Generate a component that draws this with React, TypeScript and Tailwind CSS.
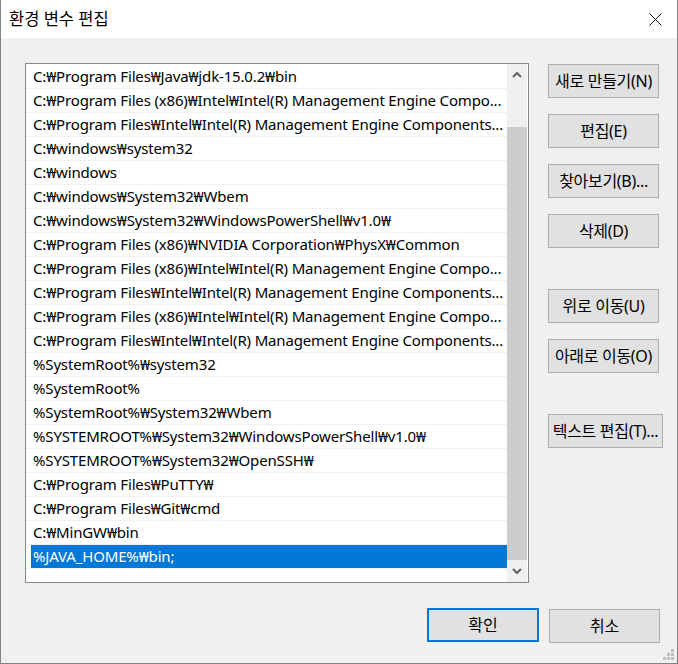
const FONT = { fontFamily: '"Noto Sans", "Noto Sans CJK KR", sans-serif' };

const PATHS = [
  'C:₩Program Files₩Java₩jdk-15.0.2₩bin',
  'C:₩Program Files (x86)₩Intel₩Intel(R) Management Engine Compo...',
  'C:₩Program Files₩Intel₩Intel(R) Management Engine Components...',
  'C:₩windows₩system32',
  'C:₩windows',
  'C:₩windows₩System32₩Wbem',
  'C:₩windows₩System32₩WindowsPowerShell₩v1.0₩',
  'C:₩Program Files (x86)₩NVIDIA Corporation₩PhysX₩Common',
  'C:₩Program Files (x86)₩Intel₩Intel(R) Management Engine Compo...',
  'C:₩Program Files₩Intel₩Intel(R) Management Engine Components...',
  'C:₩Program Files (x86)₩Intel₩Intel(R) Management Engine Compo...',
  'C:₩Program Files₩Intel₩Intel(R) Management Engine Components...',
  '%SystemRoot%₩system32',
  '%SystemRoot%',
  '%SystemRoot%₩System32₩Wbem',
  '%SYSTEMROOT%₩System32₩WindowsPowerShell₩v1.0₩',
  '%SYSTEMROOT%₩System32₩OpenSSH₩',
  'C:₩Program Files₩PuTTY₩',
  'C:₩Program Files₩Git₩cmd',
  'C:₩MinGW₩bin',
  '%JAVA_HOME%₩bin;',
];

const SELECTED = PATHS.length - 1;

function Chevron({ up }: { up?: boolean }) {
  return (
    <svg width="10" height="6" viewBox="0 0 10 6" aria-hidden>
      <polyline
        points={up ? '1,5 5,1 9,5' : '1,1 5,5 9,1'}
        fill="none"
        stroke="#606060"
        strokeWidth="2"
      />
    </svg>
  );
}

function DialogButton({ label, wide, className = '' }: { label: string; wide?: boolean; className?: string }) {
  return (
    <button
      type="button"
      className={`${wide ? 'w-[115px]' : 'w-[111px]'} h-[34px] shrink-0 border border-[#adadad] bg-[#e1e1e1] text-[16px] tracking-[-0.3px] text-black whitespace-nowrap ${className}`}
    >
      {label}
    </button>
  );
}

function PathList() {
  return (
    <div className="w-[504px] h-[520px] border border-[#828790] bg-white flex">
      <div className="w-[481px] pt-[1px]">
        {PATHS.map((p, i) => (
          <div key={i} className="h-[24px] border-b border-[#f0f0f0]">
            <div
              className={`ml-[5px] h-[23px] pl-[2px] flex items-center overflow-hidden whitespace-nowrap text-[15px] tracking-[-0.16px] ${
                i === SELECTED ? 'bg-[#0078d7] text-white' : 'text-black'
              }`}
            >
              {p}
            </div>
          </div>
        ))}
      </div>
      <div className="w-[20px] bg-[#f0f0f0] flex flex-col">
        <div className="h-[21px] flex items-center justify-center">
          <Chevron up />
        </div>
        <div className="flex-1 flex flex-col">
          <div className="h-[42px]" />
          <div className="flex-1 bg-[#cdcdcd]" />
        </div>
        <div className="h-[22px] flex items-center justify-center">
          <Chevron />
        </div>
      </div>
    </div>
  );
}

export default function App() {
  return (
    <div
      className="relative w-[678px] h-[664px] bg-[#f0f0f0] border-x border-b border-[#838383] flex flex-col"
      style={FONT}
    >
      <div className="h-[38px] bg-white flex items-center justify-between pl-[8px] pr-[15px] shrink-0">
        <span className="text-[16.5px] text-black">환경 변수 편집</span>
        <svg width="13" height="13" viewBox="0 0 13 13" aria-hidden>
          <path d="M0.5 0.5 L12.5 12.5 M12.5 0.5 L0.5 12.5" stroke="#111" strokeWidth="1" />
        </svg>
      </div>

      <div className="flex pt-[25px] pl-[24px]">
        <PathList />
        <div className="ml-[19px] mt-[1px] flex flex-col">
          <DialogButton label="새로 만들기(N)" />
          <DialogButton label="편집(E)" className="mt-[16px]" />
          <DialogButton label="찾아보기(B)..." className="mt-[16px]" />
          <DialogButton label="삭제(D)" className="mt-[16px]" />
          <DialogButton label="위로 이동(U)" className="mt-[41px]" />
          <DialogButton label="아래로 이동(O)" className="mt-[16px]" />
          <DialogButton label="텍스트 편집(T)..." wide className="mt-[41px]" />
        </div>
      </div>

      <div className="flex justify-end gap-[10px] pr-[17px] mt-[25px]">
        <button
          type="button"
          className="w-[112px] h-[34px] border-2 border-[#0078d7] bg-[#e1e1e1] text-[16px] text-black"
        >
          확인
        </button>
        <DialogButton label="취소" className="mt-[1px] h-[33px]" />
      </div>

      <div className="absolute right-[3px] bottom-[3px] grid grid-cols-3 gap-[1px] w-[11px]">
        <span />
        <span />
        <span className="w-[3px] h-[3px] bg-[#bfbfbf]" />
        <span />
        <span className="w-[3px] h-[3px] bg-[#bfbfbf]" />
        <span className="w-[3px] h-[3px] bg-[#bfbfbf]" />
        <span className="w-[3px] h-[3px] bg-[#bfbfbf]" />
        <span className="w-[3px] h-[3px] bg-[#bfbfbf]" />
        <span className="w-[3px] h-[3px] bg-[#bfbfbf]" />
      </div>
    </div>
  );
}
